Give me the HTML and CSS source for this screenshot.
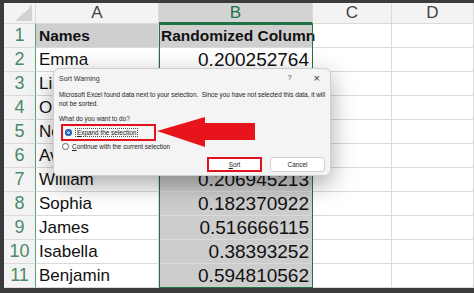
FILE: index.html
```html
<!DOCTYPE html>
<html>
<head>
  <title>Sort Warning</title>
  <link rel="stylesheet" href="styles.css">
</head>
<body>
  <div class="frame">
    <div class="sheet">
      <div class="grid">
        <div class="corner"><span class="tri"></span></div>
        <div class="colhead">A</div>
        <div class="colhead sel">B</div>
        <div class="colhead">C</div>
        <div class="colhead">D</div>

        <div class="rowhead">1</div>
        <div class="cell title">Names</div>
        <div class="cell title wide">Randomized Column</div>
        <div class="cell"></div>
        <div class="cell"></div>

        <div class="rowhead">2</div>
        <div class="cell">Emma</div>
        <div class="cell num active">0.200252764</div>
        <div class="cell"></div>
        <div class="cell"></div>

        <div class="rowhead">3</div>
        <div class="cell">Liam</div>
        <div class="cell num">0.711904332</div>
        <div class="cell"></div>
        <div class="cell"></div>

        <div class="rowhead">4</div>
        <div class="cell">Olivia</div>
        <div class="cell num">0.425781903</div>
        <div class="cell"></div>
        <div class="cell"></div>

        <div class="rowhead">5</div>
        <div class="cell">Noah</div>
        <div class="cell num">0.838204117</div>
        <div class="cell"></div>
        <div class="cell"></div>

        <div class="rowhead">6</div>
        <div class="cell">Ava</div>
        <div class="cell num">0.061538240</div>
        <div class="cell"></div>
        <div class="cell"></div>

        <div class="rowhead">7</div>
        <div class="cell">William</div>
        <div class="cell num">0.206945213</div>
        <div class="cell"></div>
        <div class="cell"></div>

        <div class="rowhead">8</div>
        <div class="cell">Sophia</div>
        <div class="cell num">0.182370922</div>
        <div class="cell"></div>
        <div class="cell"></div>

        <div class="rowhead">9</div>
        <div class="cell">James</div>
        <div class="cell num">0.516666115</div>
        <div class="cell"></div>
        <div class="cell"></div>

        <div class="rowhead">10</div>
        <div class="cell">Isabella</div>
        <div class="cell num">0.38393252</div>
        <div class="cell"></div>
        <div class="cell"></div>

        <div class="rowhead">11</div>
        <div class="cell">Benjamin</div>
        <div class="cell num">0.594810562</div>
        <div class="cell"></div>
        <div class="cell"></div>
      </div>

      <div class="selection"></div>

      <div class="dialog">
        <div class="dlg-head">
          <span class="dlg-title">Sort Warning</span>
          <span class="dlg-icons"><span>?</span><span class="x">&#215;</span></span>
        </div>
        <p class="dlg-msg">Microsoft Excel found data next to your selection.&nbsp; Since you have not selected this data, it will<br>not be sorted.</p>
        <p class="dlg-q">What do you want to do?</p>
        <div class="option picked">
          <span class="radio on"></span><span class="focus"><u>E</u>xpand the selection</span>
        </div>
        <div class="option">
          <span class="radio"></span><span><u>C</u>ontinue with the current selection</span>
        </div>
        <div class="buttons">
          <button class="btn primary"><u>S</u>ort</button>
          <button class="btn">Cancel</button>
        </div>
      </div>

      <svg class="arrow" width="100" height="32" viewBox="0 0 100 32">
        <polygon points="0,14 48,0 48,6 98,6 98,23 48,23 48,30" fill="#e8141c"/>
      </svg>
    </div>
  </div>
</body>
</html>
```

FILE: styles.css
```css
body {
  margin: 0;
  background: #3b3b3b;
  font-family: "Liberation Sans", Arial, sans-serif;
}

.frame {
  padding: 3px 0 5px 4px;
  height: 293px;
  box-sizing: border-box;
}

.sheet {
  position: relative;
  background: #fff;
  height: 285px;
  overflow: hidden;
}

.grid {
  display: grid;
  grid-template-columns: 32px 123px 154px 79px 1fr;
  grid-template-rows: 21px repeat(11, 24px);
}

.grid > div {
  box-sizing: border-box;
  border-right: 1px solid #dadada;
  border-bottom: 1px solid #dadada;
  display: flex;
  align-items: center;
  white-space: nowrap;
  overflow: hidden;
}

.corner {
  background: #f3f3f3;
  position: relative;
}

.corner .tri {
  position: absolute;
  right: 3px;
  bottom: 2px;
  width: 16px;
  height: 16px;
  background: linear-gradient(135deg, transparent 50%, #d2d2d2 50%);
}

.colhead {
  background: #f3f3f3;
  justify-content: center;
  font-size: 17px;
  color: #444;
}

.colhead.sel {
  background: #d3d3d3;
  color: #217346;
  border-bottom: 2px solid #217346 !important;
}

.rowhead {
  background: #f3f3f3;
  justify-content: center;
  font-size: 18px;
  color: #4a8a66;
  border-right: 1px solid #5f9f7a !important;
}

.cell {
  font-size: 17px;
  color: #111;
  padding: 0 3px;
}

.cell.title {
  font-weight: bold;
  background: #cfcfcf;
  font-size: 15.5px;
}

.grid > .cell.wide {
  overflow: visible;
  padding-left: 2px;
}

.cell.num {
  justify-content: flex-end;
  background: #cdcdcd;
  font-size: 19px;
}

.cell.num.active {
  background: #fff;
}

.selection {
  position: absolute;
  left: 155px;
  top: 21px;
  width: 154px;
  height: 264px;
  border: 1px solid #217346;
  box-sizing: border-box;
  pointer-events: none;
}

.dialog {
  position: absolute;
  left: 49px;
  top: 65px;
  width: 278px;
  height: 108px;
  box-sizing: border-box;
  display: flex;
  flex-direction: column;
  background: #f4f4f4;
  border: 1px solid #cfcfcf;
  border-radius: 6px;
  box-shadow: 0 8px 24px rgba(0, 0, 0, 0.35);
  padding: 4px 5px 3px 5px;
  font-family: "Liberation Sans", Arial, sans-serif;
  font-size: 6.4px;
  color: #222;
}

.dlg-head {
  display: flex;
  justify-content: space-between;
  align-items: center;
  height: 10px;
  font-size: 7px;
  color: #333;
}

.dlg-icons {
  display: flex;
  align-items: center;
  gap: 22px;
  margin-right: 5px;
  line-height: 10px;
}

.dlg-icons .x {
  font-size: 11px;
}

.dlg-msg {
  margin: 7px 0 0 0;
  line-height: 9px;
  white-space: nowrap;
}

.dlg-q {
  margin: 6px 0 0 0;
  line-height: 9px;
}

.option {
  display: flex;
  align-items: center;
  gap: 3px;
  height: 10px;
  padding-left: 3px;
}

.option.picked {
  margin: 1px 0 0 2px;
  width: 95px;
  height: 17px;
  border: 2px solid #e0121c;
  box-sizing: border-box;
  padding-left: 2px;
}

.focus {
  border: 1px dotted #555;
  padding: 0 1px;
}

.radio {
  width: 7px;
  height: 7px;
  border-radius: 50%;
  border: 1px solid #666;
  box-sizing: border-box;
  background: #fff;
}

.radio.on {
  border: 2px solid #1c5fb8;
  background: #1c5fb8;
  box-shadow: inset 0 0 0 1px #fff;
}

.buttons {
  display: flex;
  justify-content: flex-end;
  gap: 8px;
  margin-top: auto;
}

.btn {
  width: 55px;
  height: 15px;
  box-sizing: border-box;
  background: #fff;
  border: 1px solid #d0d0d0;
  border-radius: 3px;
  font-family: "Liberation Sans", Arial, sans-serif;
  font-size: 6.4px;
  color: #222;
  padding: 0;
}

.btn.primary {
  border: 2px solid #e0121c;
  border-radius: 0;
}

.arrow {
  position: absolute;
  left: 153px;
  top: 114px;
}
```
